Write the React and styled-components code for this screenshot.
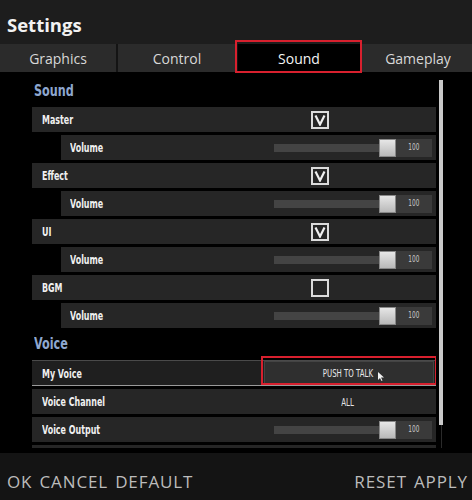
import styled, { createGlobalStyle, css } from "styled-components";

const GlobalStyle = createGlobalStyle`
  html, body {
    margin: 0;
    padding: 0;
    background: #000;
  }
  * { box-sizing: border-box; }
`;

// no condensed DIN on the box, so squeeze DejaVu Condensed a bit
const narrow = `"DejaVu Sans Condensed", "DejaVu Sans", "Liberation Sans", sans-serif`;

const squeeze = (x, origin = "left") => css`
  display: inline-block;
  transform: scaleX(${x});
  transform-origin: ${origin} center;
`;

const Screen = styled.div`
  width: 472px;
  height: 500px;
  display: flex;
  flex-direction: column;
  background: #000;
  overflow: hidden;
  font-family: "Open Sans", "Liberation Sans", sans-serif;
`;

const Header = styled.div`
  height: 44px;
  background: #1d1d1d;
  display: flex;
  align-items: center;
  padding: 4px 0 0 7px;
`;

const Title = styled.h1`
  margin: 0;
  font-size: 18.5px;
  font-weight: 700;
  color: #f2f2f2;
`;

const TabBar = styled.div`
  height: 28px;
  display: flex;
  gap: 2px;
  background: #141414;
`;

const Tab = styled.div`
  position: relative;
  flex: 0 0 ${(p) => p.$w}px;
  display: flex;
  align-items: center;
  justify-content: center;
  font-size: 14px;
  color: ${(p) => (p.$active ? "#f4f4f4" : "#d8d8d8")};
  background: ${(p) => (p.$active ? "#000" : "#2b2b2b")};
  ${(p) =>
    p.$active &&
    css`
      &::after {
        content: "";
        position: absolute;
        left: -3px;
        right: -2px;
        top: -4px;
        bottom: -1px;
        border: 2px solid #d8202e;
      }
    `}
`;

const Panel = styled.div`
  height: 381px;
  display: flex;
  padding: 0 0 5px 32px;
`;

const List = styled.div`
  width: 404px;
  display: flex;
  flex-direction: column;
  gap: 3px;
  padding-top: 6px;
  overflow: hidden;
`;

const SectionTitle = styled.div`
  flex: 0 0 26px;
  padding: 4px 0 0 2px;
  font-family: ${narrow};
  font-weight: 700;
  font-size: 16px;
  line-height: 18px;
  color: #8ea7cf;
  span {
    ${squeeze(0.78)}
  }
`;

const Row = styled.div`
  flex: 0 0 25px;
  display: flex;
  align-items: center;
  background: #262626;
  margin-left: ${(p) => (p.$sub ? 29 : 0)}px;
  ${(p) =>
    p.$focus &&
    css`
      background: #1f1f1f;
      border-top: 1px solid #4a4a4a;
      border-bottom: 1px solid #9a9a9a;
    `}
`;

const Label = styled.span`
  margin-left: ${(p) => (p.$sub ? 9 : 10)}px;
  font-family: ${narrow};
  font-weight: 700;
  font-size: 13px;
  color: #f0f0f0;
  ${squeeze(0.68)}
`;

const CheckCell = styled.div`
  margin-left: auto;
  margin-right: 107px;
  display: flex;
`;

const Checkbox = styled.div`
  width: 18px;
  height: 18px;
  border: 2px solid #dcdcdc;
  display: flex;
  align-items: center;
  justify-content: center;
`;

const Slider = styled.div`
  margin-left: auto;
  margin-right: 4px;
  display: flex;
  align-items: center;
`;

const Track = styled.div`
  width: 106px;
  height: 8px;
  background: #444;
`;

const Thumb = styled.div`
  width: 17px;
  height: 18px;
  margin-left: -1px;
  background: linear-gradient(#e6e6e6, #b9b9b9);
  border: 1px solid #888;
`;

const ValueBox = styled.div`
  width: 36px;
  height: 18px;
  display: flex;
  align-items: center;
  justify-content: center;
  background: #3a3a3a;
  font-family: ${narrow};
  font-size: 8px;
  color: #c8c8c8;
  span {
    ${squeeze(0.8, "center")}
  }
`;

const ValueCell = styled.div`
  margin-left: auto;
  margin-right: 3px;
  width: 171px;
  height: 100%;
  display: flex;
  align-items: center;
  justify-content: center;
  font-family: ${narrow};
  font-size: 10.5px;
  color: #e4e4e4;
  span {
    ${squeeze(0.74, "center")}
  }
`;

const PushButton = styled.div`
  position: relative;
  margin-left: auto;
  margin-right: 2px;
  width: 170px;
  height: 24px;
  display: flex;
  align-items: center;
  justify-content: center;
  background: #2f2f2f;
  border: 1px solid #444;
  font-family: ${narrow};
  font-size: 10.5px;
  color: #e8e8e8;
  span {
    ${squeeze(0.74, "center")}
  }
  &::after {
    content: "";
    position: absolute;
    left: -4px;
    right: -4px;
    top: -6px;
    bottom: -1px;
    border: 2px solid #d8202e;
  }
`;

const Cursor = styled.svg`
  margin: 6px 0 0 -4px;
`;

const ScrollCol = styled.div`
  width: 4px;
  margin-left: 3px;
  display: flex;
  flex-direction: column;
  padding-top: 8px;
`;

const ScrollThumb = styled.div`
  height: 345px;
  background: #c9c9c9;
`;

const ScrollRest = styled.div`
  flex: 1;
  width: 1px;
  margin-left: 2px;
  background: #2a2a2a;
`;

const Footer = styled.div`
  flex: 1;
  background: #141414;
  display: flex;
  align-items: center;
  justify-content: space-between;
  padding: 10px 4px 0 7px;
`;

const FooterGroup = styled.div`
  display: flex;
  gap: 7px;
`;

const FooterButton = styled.span`
  font-size: 17px;
  letter-spacing: 0.9px;
  color: #bcbcbc;
`;

const Check = () => (
  <svg width="12" height="12" viewBox="0 0 12 12">
    <polyline points="1.5,1.5 6,10.5 10.5,1.5" fill="none" stroke="#f0f0f0" strokeWidth="2.2" />
  </svg>
);

const VolumeSlider = ({ value }) => (
  <Slider>
    <Track />
    <Thumb />
    <ValueBox>
      <span>{value}</span>
    </ValueBox>
  </Slider>
);

const channels = [
  { name: "Master", on: true },
  { name: "Effect", on: true },
  { name: "UI", on: true },
  { name: "BGM", on: false },
];

const tabs = [
  { name: "Graphics", w: 116 },
  { name: "Control", w: 118 },
  { name: "Sound", w: 122 },
  { name: "Gameplay", w: 112 },
];

export default function App() {
  return (
    <Screen>
      <GlobalStyle />
      <Header>
        <Title>Settings</Title>
      </Header>
      <TabBar>
        {tabs.map((t) => (
          <Tab key={t.name} $w={t.w} $active={t.name === "Sound"}>
            {t.name}
          </Tab>
        ))}
      </TabBar>
      <Panel>
        <List>
          <SectionTitle>
            <span>Sound</span>
          </SectionTitle>
          {channels.flatMap((c) => [
            <Row key={c.name}>
              <Label>{c.name}</Label>
              <CheckCell>
                <Checkbox>{c.on && <Check />}</Checkbox>
              </CheckCell>
            </Row>,
            <Row $sub key={c.name + "-vol"}>
              <Label $sub>Volume</Label>
              <VolumeSlider value={100} />
            </Row>,
          ])}
          <SectionTitle>
            <span>Voice</span>
          </SectionTitle>
          <Row $focus>
            <Label>My Voice</Label>
            <PushButton>
              <span>PUSH TO TALK</span>
              <Cursor width="6" height="9" viewBox="0 0 6 9">
                <path d="M0 0 L0 8 L2 6 L3.5 9 L4.5 8.5 L3 5.5 L6 5.5 Z" fill="#f2f2f2" />
              </Cursor>
            </PushButton>
          </Row>
          <Row>
            <Label>Voice Channel</Label>
            <ValueCell>
              <span>ALL</span>
            </ValueCell>
          </Row>
          <Row>
            <Label>Voice Output</Label>
            <VolumeSlider value={100} />
          </Row>
          <Row />
        </List>
        <ScrollCol>
          <ScrollThumb />
          <ScrollRest />
        </ScrollCol>
      </Panel>
      <Footer>
        <FooterGroup>
          <FooterButton>OK</FooterButton>
          <FooterButton>CANCEL</FooterButton>
          <FooterButton>DEFAULT</FooterButton>
        </FooterGroup>
        <FooterGroup>
          <FooterButton>RESET</FooterButton>
          <FooterButton>APPLY</FooterButton>
        </FooterGroup>
      </Footer>
    </Screen>
  );
}
